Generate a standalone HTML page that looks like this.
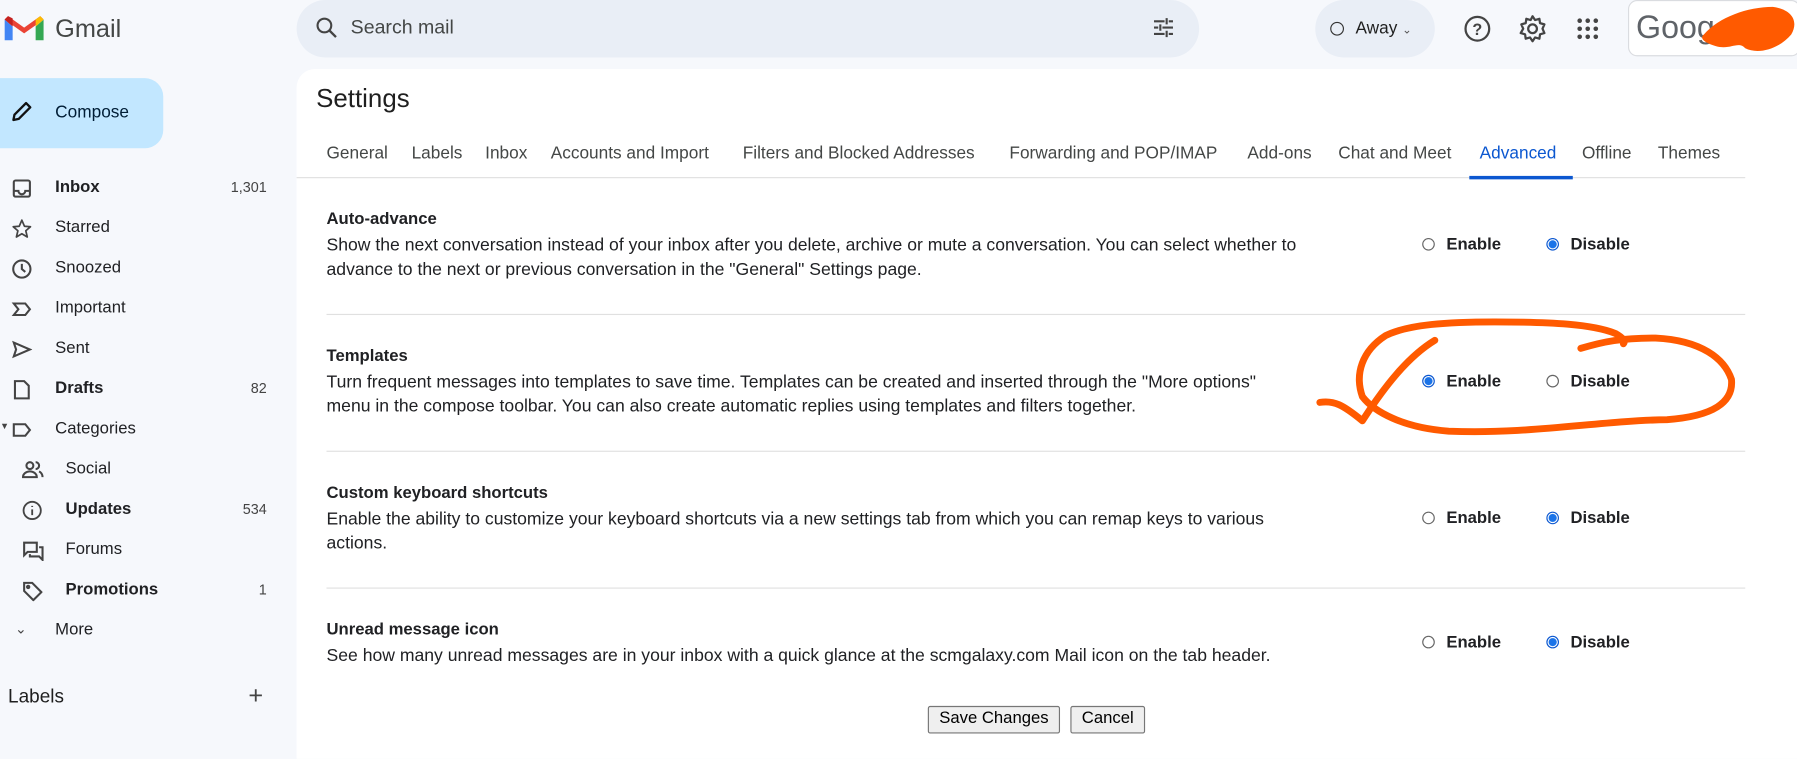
<!DOCTYPE html>
<html><head><meta charset="utf-8"><style>
html,body{margin:0;padding:0;width:1797px;height:731px;overflow:hidden;background:#f6f8fc;font-family:"Liberation Sans",Arial,sans-serif;color:#1f1f1f}
#w{position:absolute;left:0;top:0;width:1563px;height:638px;transform:scale(1.1497);transform-origin:0 0}
.a{position:absolute;white-space:nowrap}
.nav{position:absolute;left:0;width:250px;height:32px;font-size:14.5px;color:#202124}
.nav .ic{position:absolute;left:10px;top:7px}
.nav .t{position:absolute;left:48px;top:7px}
.nav .n{position:absolute;right:18px;top:8px;font-size:12.5px;color:#444}
.sub .ic{left:19px}.sub .t{left:57px}
b{font-weight:bold}
.main{position:absolute;left:258px;top:60px;width:1305px;height:600px;background:#fff;border-radius:16px 0 0 0}
.tab{position:absolute;top:125px;font-size:15px;color:#444746}
.row{position:absolute;left:284px;width:1234px;font-size:15.3px;line-height:21.5px;color:#202124;white-space:nowrap}
.row h4{margin:0;font-size:14.5px;font-weight:bold;color:#202124}
.hr{position:absolute;left:284px;width:1234px;height:1px;background:#e0e0e0}
.rad{position:absolute;font-size:14.5px;font-weight:bold;color:#202124}
.rad i{display:inline-block;width:11px;height:11px;border:1px solid #666;border-radius:50%;vertical-align:-1px;margin-right:10px;box-sizing:border-box;position:relative}
.rad i.on{border:1px solid #0b57d0;background:radial-gradient(circle,#1a73e8 0 3.2px,#fff 3.8px)}
.btn{position:absolute;top:614px;height:22px;border:1px solid #767676;border-radius:2px;background:#efefef;font-size:14.5px;line-height:21px;text-align:center;color:#000}
</style></head><body><div id="w">
<svg class="a" style="left:4px;top:13px" width="34" height="24" viewBox="0 0 34 24"><path d="M0 4v18h7V10z" fill="#4285f4"/><path d="M27 10v12h7V4z" fill="#34a853"/><path d="M0 4l17 12L34 4 31 1 17 11 3 1z" fill="#ea4335"/><path d="M27 4v6l7-6-3-3z" fill="#fbbc04"/><path d="M0 4l7 6V3L3 1z" fill="#c5221f"/></svg>
<div class="a" style="left:48px;top:12px;font-size:22px;color:#444746">Gmail</div>
<div class="a" style="left:258px;top:0;width:785px;height:50px;background:#e9eef6;border-radius:25px"></div>
<svg class="a" style="left:273px;top:13px" width="22" height="22" viewBox="0 0 24 24"><circle cx="10" cy="10" r="6.5" fill="none" stroke="#444" stroke-width="2"/><path d="M15 15l6 6" stroke="#444" stroke-width="2.2"/></svg>
<div class="a" style="left:305px;top:14px;font-size:17px;color:#444746">Search mail</div>
<svg class="a" style="left:1001px;top:13px" width="22" height="22" viewBox="0 0 24 24" stroke="#444" stroke-width="2" fill="none"><path d="M3 6h10M17 6h4M15 3v6M3 12h4M11 12h10M9 9v6M3 18h10M17 18h4M15 15v6"/></svg>
<div class="a" style="left:1144px;top:0;width:104px;height:50px;background:#e9eef6;border-radius:25px"></div>
<div class="a" style="left:1157px;top:19px;width:10px;height:10px;border:1.5px solid #333;border-radius:50%"></div>
<div class="a" style="left:1179px;top:16px;font-size:15px;color:#1f1f1f">Away <span style="font-size:10px;color:#555">&#8964;</span></div>
<svg class="a" style="left:1272px;top:12px" width="26" height="26" viewBox="0 0 24 24"><circle cx="12" cy="12" r="9.5" fill="none" stroke="#444" stroke-width="1.8"/><text x="12" y="17" font-size="13" font-family="Liberation Sans" text-anchor="middle" fill="#444" font-weight="bold">?</text></svg>
<svg class="a" style="left:1320px;top:12px" width="26" height="26" viewBox="0 0 24 24"><path d="M12 2l2 3 3.5-1 .5 3.5 3.5 1-1.5 3.5 1.5 3.5-3.5 1-.5 3.5-3.5-1-2 3-2-3-3.5 1-.5-3.5-3.5-1L4.5 12 3 8.5l3.5-1L7 4l3.5 1z" fill="none" stroke="#444" stroke-width="1.8" stroke-linejoin="round"/><circle cx="12" cy="12" r="3.5" fill="none" stroke="#444" stroke-width="1.8"/></svg>
<svg class="a" style="left:1371px;top:15px" width="20" height="20" viewBox="0 0 20 20" fill="#444"><circle cx="3" cy="3" r="2"/><circle cx="10" cy="3" r="2"/><circle cx="17" cy="3" r="2"/><circle cx="3" cy="10" r="2"/><circle cx="10" cy="10" r="2"/><circle cx="17" cy="10" r="2"/><circle cx="3" cy="17" r="2"/><circle cx="10" cy="17" r="2"/><circle cx="17" cy="17" r="2"/></svg>
<div class="a" style="left:1416px;top:0;width:150px;height:49px;background:#fff;border:1px solid #dadce0;border-radius:8px;box-sizing:border-box"></div>
<div class="a" style="left:1423px;top:8px;font-size:28px;color:#5f6368">Goog</div>
<svg class="a" style="left:1470px;top:0" width="93" height="55" viewBox="0 0 93 55"><path d="M12 30C25 15 50 6 72 6 88 8 95 18 88 30 78 42 60 48 48 42 42 35 35 44 22 40 12 37 8 33 12 30Z" fill="#ff5a00"/></svg>
<div class="a" style="left:0;top:68px;width:142px;height:61px;background:#c2e7ff;border-radius:0 16px 16px 0"></div>
<svg class="a" style="left:8px;top:86px" width="22" height="22" viewBox="0 0 24 24"><path d="M4 20l1-5L16 4l4 4L9 19z" fill="none" stroke="#111" stroke-width="2.2" stroke-linejoin="round"/></svg>
<div class="a" style="left:48px;top:89px;font-size:15px;color:#001d35">Compose</div>
<div class="nav" style="top:148px"><svg class="ic" width="18" height="18" viewBox="0 0 18 18" fill="none" stroke="#444" stroke-width="1.8"><rect x="2" y="2" width="14" height="14" rx="1.5"/><path d="M2 11h4a3 3 0 006 0h4"/></svg><b class="t">Inbox</b><span class="n">1,301</span></div>
<div class="nav" style="top:183px"><svg class="ic" width="18" height="18" viewBox="0 0 24 24" fill="none" stroke="#444" stroke-width="2" stroke-linejoin="round"><path d="M12 2l3 7 7 .6-5.4 4.7 1.7 7.2L12 17.8 5.7 21.5l1.7-7.2L2 9.6 9 9z"/></svg><span class="t">Starred</span></div>
<div class="nav" style="top:218px"><svg class="ic" width="18" height="18" viewBox="0 0 18 18" fill="none" stroke="#444" stroke-width="1.8"><circle cx="9" cy="9" r="7.5"/><path d="M9 4.5V9l3 2.5"/></svg><span class="t">Snoozed</span></div>
<div class="nav" style="top:253px"><svg class="ic" width="18" height="18" viewBox="0 0 18 18" fill="none" stroke="#444" stroke-width="1.8"><path d="M2 4h10l4 5-4 5H2l4-5z"/></svg><span class="t">Important</span></div>
<div class="nav" style="top:288px"><svg class="ic" width="18" height="18" viewBox="0 0 18 18" fill="none" stroke="#444" stroke-width="1.8"><path d="M2 3l14 6-14 6 2-6z"/></svg><span class="t">Sent</span></div>
<div class="nav" style="top:323px"><svg class="ic" width="18" height="18" viewBox="0 0 18 18" fill="none" stroke="#444" stroke-width="1.8"><path d="M3 1.5h8l4 4v11H3z"/></svg><b class="t">Drafts</b><span class="n">82</span></div>
<div class="nav" style="top:358px"><span class="a" style="left:0;top:8px;font-size:8px;color:#444">▼</span><svg class="ic" width="18" height="18" viewBox="0 0 18 18" fill="none" stroke="#444" stroke-width="1.8"><path d="M2 4h10l4 5-4 5H2z"/></svg><span class="t">Categories</span></div>
<div class="nav sub" style="top:393px"><svg class="ic" width="20" height="18" viewBox="0 0 20 18" fill="none" stroke="#444" stroke-width="1.8"><circle cx="7" cy="5" r="3"/><path d="M1 15c0-3 3-5 6-5s6 2 6 5zM12 2a3 3 0 010 6M15 10c2 1 3 3 3 5"/></svg><span class="t">Social</span></div>
<div class="nav sub" style="top:428px"><svg class="ic" width="18" height="18" viewBox="0 0 18 18" fill="none" stroke="#444" stroke-width="1.6"><circle cx="9" cy="9" r="7.5"/><path d="M9 8v5M9 5v1"/></svg><b class="t">Updates</b><span class="n">534</span></div>
<div class="nav sub" style="top:463px"><svg class="ic" width="20" height="18" viewBox="0 0 20 18" fill="none" stroke="#444" stroke-width="1.8"><path d="M2 2h11v8H5l-3 3zM15 6h3v11l-3-3H7v-2"/></svg><span class="t">Forums</span></div>
<div class="nav sub" style="top:498px"><svg class="ic" width="18" height="18" viewBox="0 0 18 18" fill="none" stroke="#444" stroke-width="1.8"><path d="M2 2h7l8 8-7 7-8-8z"/><circle cx="5.5" cy="5.5" r="1"/></svg><b class="t">Promotions</b><span class="n">1</span></div>
<div class="nav" style="top:533px"><span class="ic" style="font-size:12px;top:7px;left:13px;color:#444">&#8964;</span><span class="t">More</span></div>
<div class="a" style="left:7px;top:597px;font-size:16.5px;color:#1f1f1f">Labels</div>
<div class="a" style="left:216px;top:592px;font-size:22px;color:#444;font-weight:300">+</div>
<div class="main"></div>
<div class="a" style="left:275px;top:73px;font-size:22.5px;color:#1f1f1f">Settings</div>
<div class="tab" style="left:284px">General</div>
<div class="tab" style="left:358px">Labels</div>
<div class="tab" style="left:422px">Inbox</div>
<div class="tab" style="left:479px">Accounts and Import</div>
<div class="tab" style="left:646px">Filters and Blocked Addresses</div>
<div class="tab" style="left:878px">Forwarding and POP/IMAP</div>
<div class="tab" style="left:1085px">Add-ons</div>
<div class="tab" style="left:1164px">Chat and Meet</div>
<div class="tab" style="left:1287px;color:#0b57d0">Advanced</div>
<div class="tab" style="left:1376px">Offline</div>
<div class="tab" style="left:1442px">Themes</div>
<div class="hr" style="left:258px;width:1260px;top:154px"></div>
<div class="a" style="left:1278px;top:153px;width:90px;height:3px;background:#0b57d0"></div>
<div class="row" style="top:181px"><h4>Auto-advance</h4>Show the next conversation instead of your inbox after you delete, archive or mute a conversation. You can select whether to<br>advance to the next or previous conversation in the "General" Settings page.</div>
<div class="rad" style="left:1237px;top:205px"><i></i>Enable</div>
<div class="rad" style="left:1345px;top:205px"><i class="on"></i>Disable</div>
<div class="hr" style="top:273px"></div>
<div class="row" style="top:300px"><h4>Templates</h4>Turn frequent messages into templates to save time. Templates can be created and inserted through the "More options"<br>menu in the compose toolbar. You can also create automatic replies using templates and filters together.</div>
<div class="rad" style="left:1237px;top:324px"><i class="on"></i>Enable</div>
<div class="rad" style="left:1345px;top:324px"><i></i>Disable</div>
<div class="hr" style="top:392px"></div>
<div class="row" style="top:419px"><h4>Custom keyboard shortcuts</h4>Enable the ability to customize your keyboard shortcuts via a new settings tab from which you can remap keys to various<br>actions.</div>
<div class="rad" style="left:1237px;top:443px"><i></i>Enable</div>
<div class="rad" style="left:1345px;top:443px"><i class="on"></i>Disable</div>
<div class="hr" style="top:511px"></div>
<div class="row" style="top:538px"><h4>Unread message icon</h4>See how many unread messages are in your inbox with a quick glance at the scmgalaxy.com Mail icon on the tab header.</div>
<div class="rad" style="left:1237px;top:551px"><i></i>Enable</div>
<div class="rad" style="left:1345px;top:551px"><i class="on"></i>Disable</div>
<div class="btn" style="left:807px;width:113px">Save Changes</div>
<div class="btn" style="left:931px;width:63px">Cancel</div>
<svg class="a" style="left:0;top:0" width="1563" height="638" viewBox="0 0 1563 638"><path d="M1148 350C1160 348 1168 352 1185 366C1205 335 1225 310 1248 296M1375 303C1395 297 1410 294 1440 294C1480 296 1500 312 1506 330C1508 350 1490 362 1450 365C1390 366 1330 378 1260 375C1220 372 1195 358 1185 345C1178 325 1185 305 1205 292C1225 282 1260 280 1300 280C1350 280 1385 282 1405 290C1412 294 1414 297 1412 299" fill="none" stroke="#ff5a00" stroke-width="6" stroke-linecap="round" stroke-linejoin="round"/></svg>
</div></body></html>
